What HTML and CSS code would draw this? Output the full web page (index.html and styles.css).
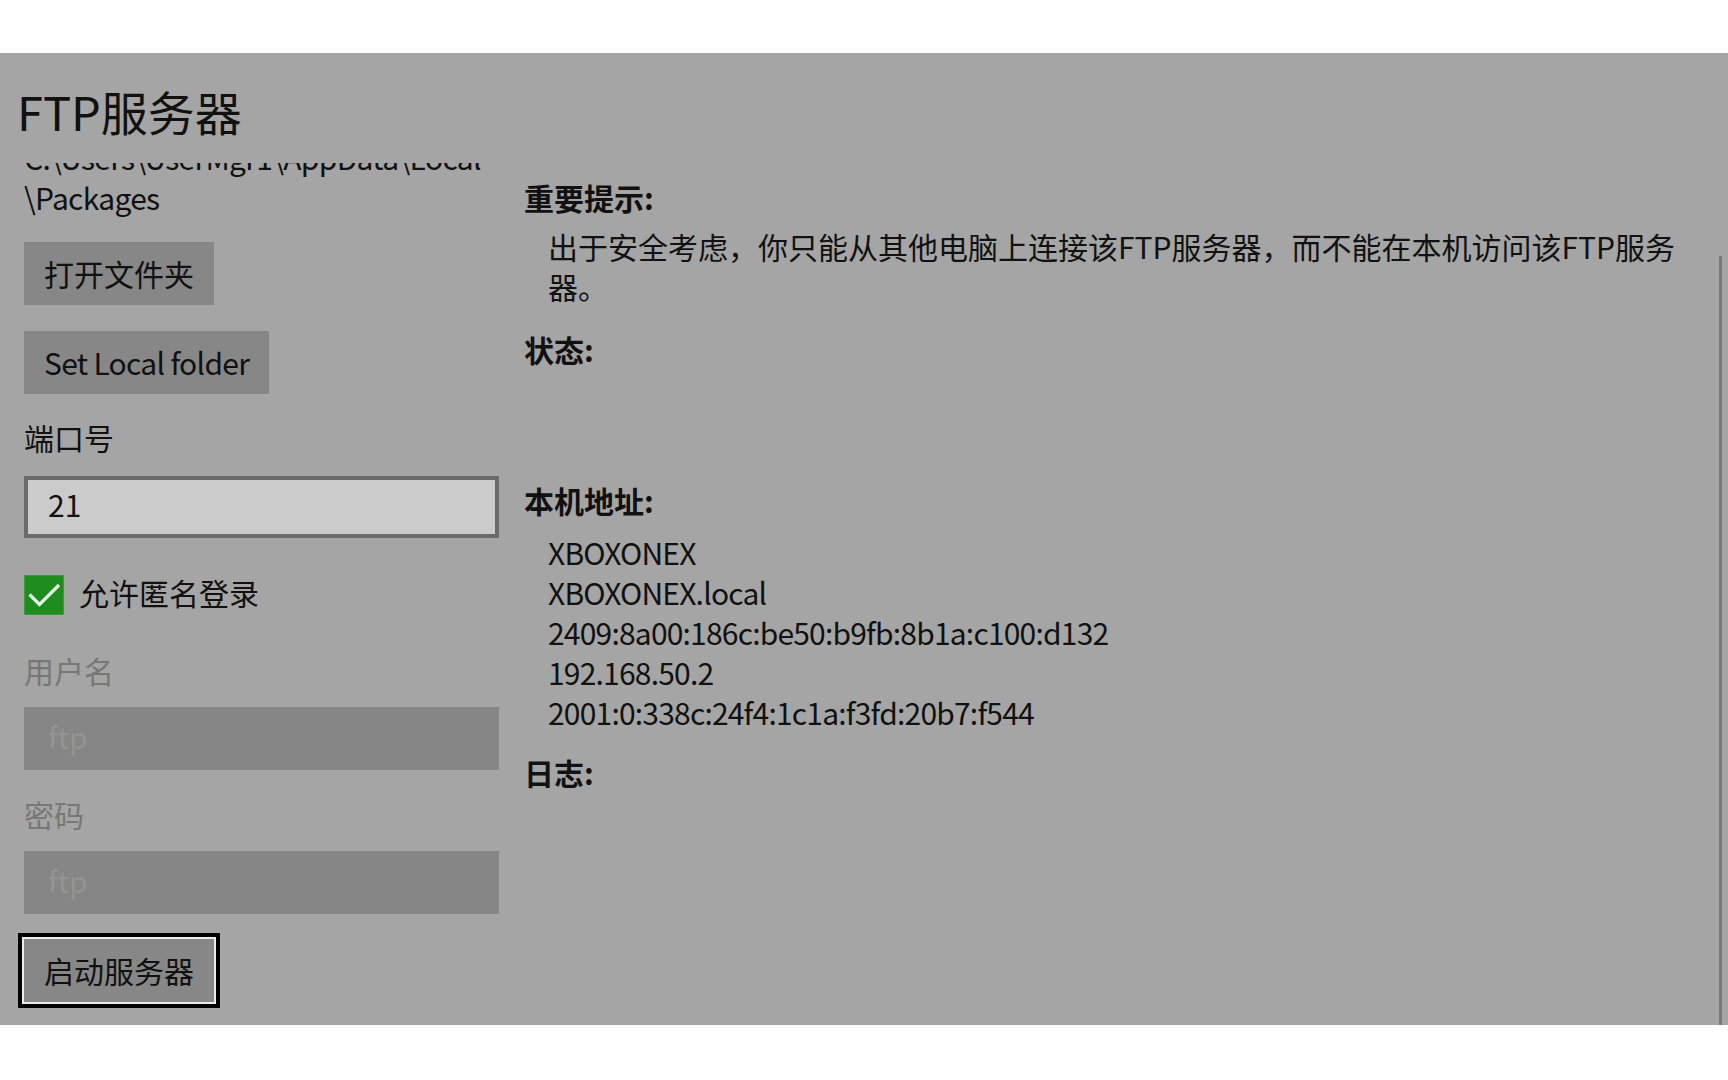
FILE: index.html
```html
<!DOCTYPE html>
<html lang="zh-CN">
<head>
    <meta charset="UTF-8">
    <meta name="viewport" content="width=device-width, initial-scale=1.0">
    <title>FTP服务器</title>
    <link rel="stylesheet" href="styles.css">
</head>
<body>
    <div class="app">
        <div class="topbar"></div>

        <main class="page">
            <h1 class="title">FTP服务器</h1>

            <div class="scroller">
                <div class="content">
                    <section class="left">
                        <p class="path">C:\Users\UserMgr1\AppData\Local<wbr>\Packages</p>
                        <button class="btn btn-first">打开文件夹</button>
                        <button class="btn btn-latin">Set Local folder</button>

                        <p class="label">端口号</p>
                        <input class="field" type="text" value="21">

                        <label class="check">
                            <span class="check-box">
                                <svg width="40" height="40" viewBox="0 0 40 40">
                                    <path d="M5.5 19.5 L15.5 29.5 L35 10" fill="none" stroke="#e4f3e4" stroke-width="3.2"/>
                                </svg>
                            </span>
                            <span class="check-text">允许匿名登录</span>
                        </label>

                        <p class="label label-off">用户名</p>
                        <input class="field field-off" type="text" placeholder="ftp" disabled>

                        <p class="label label-off label-pw">密码</p>
                        <input class="field field-off" type="password" placeholder="ftp" disabled>

                        <button class="btn btn-start">启动服务器</button>
                    </section>

                    <section class="right">
                        <h2 class="heading">重要提示:</h2>
                        <p class="value note">出于安全考虑，你只能从其他电脑上连接该FTP服务器，而不能在本机访问该FTP服务器。</p>

                        <h2 class="heading">状态:</h2>
                        <p class="value status"></p>

                        <h2 class="heading">本机地址:</h2>
                        <ul class="value addresses">
                            <li>XBOXONEX</li>
                            <li>XBOXONEX.local</li>
                            <li>2409:8a00:186c:be50:b9fb:8b1a:c100:d132</li>
                            <li>192.168.50.2</li>
                            <li>2001:0:338c:24f4:1c1a:f3fd:20b7:f544</li>
                        </ul>

                        <h2 class="heading heading-log">日志:</h2>
                    </section>
                </div>

                <div class="scroll-track">
                    <div class="scroll-thumb"></div>
                </div>
            </div>
        </main>

        <div class="bottombar"></div>
    </div>
</body>
</html>
```

FILE: styles.css
```css
* {
    margin: 0;
    padding: 0;
    box-sizing: border-box;
    font-family: "Noto Sans CJK SC", "Noto Sans", sans-serif;
}

body {
    background: #fff;
    color: #111;
    width: 1728px;
    height: 1080px;
    overflow: hidden;
}

.app {
    display: flex;
    flex-direction: column;
    height: 1080px;
}

.topbar {
    height: 53px;
    background: #fff;
}

.bottombar {
    height: 55px;
    background: #fff;
}

.page {
    flex: 1;
    display: flex;
    flex-direction: column;
    background: #a5a5a5;
    overflow: hidden;
}

.title {
    font-size: 47px;
    font-weight: 400;
    line-height: 64px;
    padding: 26px 0 20px 17px;
}

.scroller {
    flex: 1;
    display: flex;
    overflow: hidden;
}

.content {
    flex: 1;
    display: flex;
    gap: 25px;
    padding-left: 24px;
    margin-top: -26px;
    font-size: 30px;
    line-height: 40px;
}

/* left column */

.left {
    width: 475px;
    display: flex;
    flex-direction: column;
    align-items: flex-start;
}

.path {
    width: 475px;
    letter-spacing: -0.7px;
}

.btn {
    font-size: 30px;
    line-height: 39px;
    padding: 12px 20px;
    margin-top: 26px;
    background: #878787;
    color: #111;
    border: none;
    cursor: pointer;
}

.btn-first {
    margin-top: 25px;
}

.btn-latin {
    letter-spacing: -0.7px;
}

.btn-start {
    margin-top: 25px;
    box-shadow: 0 0 0 2px #ececec, 0 0 0 6px #000;
}

.label {
    margin-top: 23px;
}

.label-off {
    margin-top: 35px;
    color: #777;
}

.label-pw {
    margin-top: 24px;
}

.field {
    width: 475px;
    height: 62px;
    margin-top: 19px;
    padding: 0 20px 6px;
    border: 4px solid #6b6b6b;
    background: #cbcbcb;
    color: #111;
    font-size: 30px;
    outline: none;
}

.field-off {
    height: 63px;
    margin-top: 17px;
    border-color: #868686;
    background: #868686;
}

.field-off::placeholder {
    color: #939393;
}

.check {
    display: flex;
    align-items: center;
    gap: 15px;
    height: 40px;
    margin-top: 37px;
}

.check-text {
    padding-bottom: 6px;
}

.check-box {
    width: 40px;
    height: 40px;
    background: #1f8c1f;
    box-shadow: inset 0 0 0 1px #3a9c3a;
}

.check-box svg {
    display: block;
}

/* right column */

.right {
    flex: 1;
    padding-top: 40px;
}

.heading {
    font-size: 30px;
    font-weight: 600;
    line-height: 40px;
    margin-top: 23px;
}

.heading:first-child {
    margin-top: 0;
}

.value {
    margin-top: 9px;
    padding-left: 24px;
}

.note {
    max-width: 1164px;
}

.status {
    min-height: 79px;
}

.addresses {
    list-style: none;
    margin-top: 12px;
    letter-spacing: -0.8px;
}

.heading-log {
    margin-top: 20px;
}

/* scroll indicator */

.scroll-track {
    width: 9px;
    display: flex;
    flex-direction: column;
    padding-top: 93px;
}

.scroll-thumb {
    width: 3px;
    flex: 1;
    background: #7a7a7a;
}
```
